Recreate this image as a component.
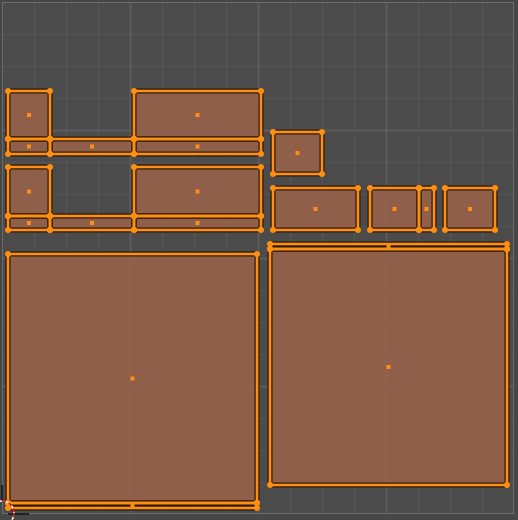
const FACES: [number, number, number, number][] = [
  [8, 91, 50, 139],
  [8, 139, 50, 154],
  [50, 139, 134, 154],
  [134, 139, 261, 154],
  [134, 91, 261, 139],
  [8, 167, 50, 216],
  [8, 216, 50, 230],
  [50, 216, 134, 230],
  [134, 216, 261, 230],
  [134, 167, 261, 216],
  [273, 132, 322, 174],
  [273, 188, 358, 230],
  [370, 188, 419, 230],
  [419, 188, 434, 230],
  [445, 188, 495, 230],
  [8, 254, 257, 503],
  [8, 503, 257, 508],
  [270, 249, 507, 485],
  [270, 244, 507, 249],
];

const STEPS = Array.from({ length: 15 }, (_, i) => 2 + 32 * (i + 1));

const App = () => {
  const verts = FACES.flatMap(([x1, y1, x2, y2]) => [
    [x1, y1],
    [x2, y1],
    [x1, y2],
    [x2, y2],
  ]);

  return (
    <div className="w-[518px] h-[520px] bg-[#474747] overflow-hidden">
      <svg width={518} height={520} viewBox="0 0 518 520" className="block">
        <rect x={2} y={2} width={512} height={512} fill="#4b4b4b" />
        {/* grid */}
        {STEPS.map((v, i) => {
          const major = (i + 1) % 4 === 0;
          const c = major ? "#5c5c5c" : "#535353";
          return (
            <g key={v}>
              <line x1={v + 0.5} y1={2} x2={v + 0.5} y2={514} stroke={c} strokeWidth={major ? 2 : 1.5} />
              <line x1={2} y1={v + 0.5} x2={514} y2={v + 0.5} stroke={c} strokeWidth={major ? 2 : 1.5} />
            </g>
          );
        })}
        <rect x={2.5} y={2.5} width={511} height={511} fill="none" stroke="#6c6c6c" strokeWidth={1} />

        {/* faces */}
        {FACES.map(([x1, y1, x2, y2], i) => (
          <rect key={`f${i}`} x={x1} y={y1} width={x2 - x1} height={y2 - y1} fill="rgb(160,100,72)" fillOpacity={0.8} />
        ))}
        {FACES.map(([x1, y1, x2, y2], i) => (
          <rect key={`d${i}`} x={x1} y={y1} width={x2 - x1} height={y2 - y1} fill="none" stroke="#2a1708" strokeWidth={5} />
        ))}
        {FACES.map(([x1, y1, x2, y2], i) => (
          <rect key={`o${i}`} x={x1} y={y1} width={x2 - x1} height={y2 - y1} fill="none" stroke="#ff8f12" strokeWidth={2.6} />
        ))}
        {verts.map(([x, y], i) => (
          <circle key={`v${i}`} cx={x} cy={y} r={3} fill="#ff8f12" />
        ))}
        {FACES.map(([x1, y1, x2, y2], i) => (
          <rect key={`c${i}`} x={(x1 + x2) / 2 - 2} y={(y1 + y2) / 2 - 2} width={4} height={4} fill="#ff8f12" />
        ))}

        {/* 2d cursor */}
        <line x1={2} y1={485} x2={2} y2={500} stroke="#111" strokeWidth={1.5} />
        <line x1={8} y1={514} x2={29} y2={514} stroke="#111" strokeWidth={1.5} />
        <circle cx={2} cy={513} r={12} fill="none" stroke="#e02020" strokeWidth={1.5} strokeDasharray="4 3" />
        <circle cx={2} cy={513} r={12} fill="none" stroke="#ffffff" strokeWidth={1.5} strokeDasharray="3 4" strokeDashoffset={-4} />
      </svg>
    </div>
  );
};

export default App;
